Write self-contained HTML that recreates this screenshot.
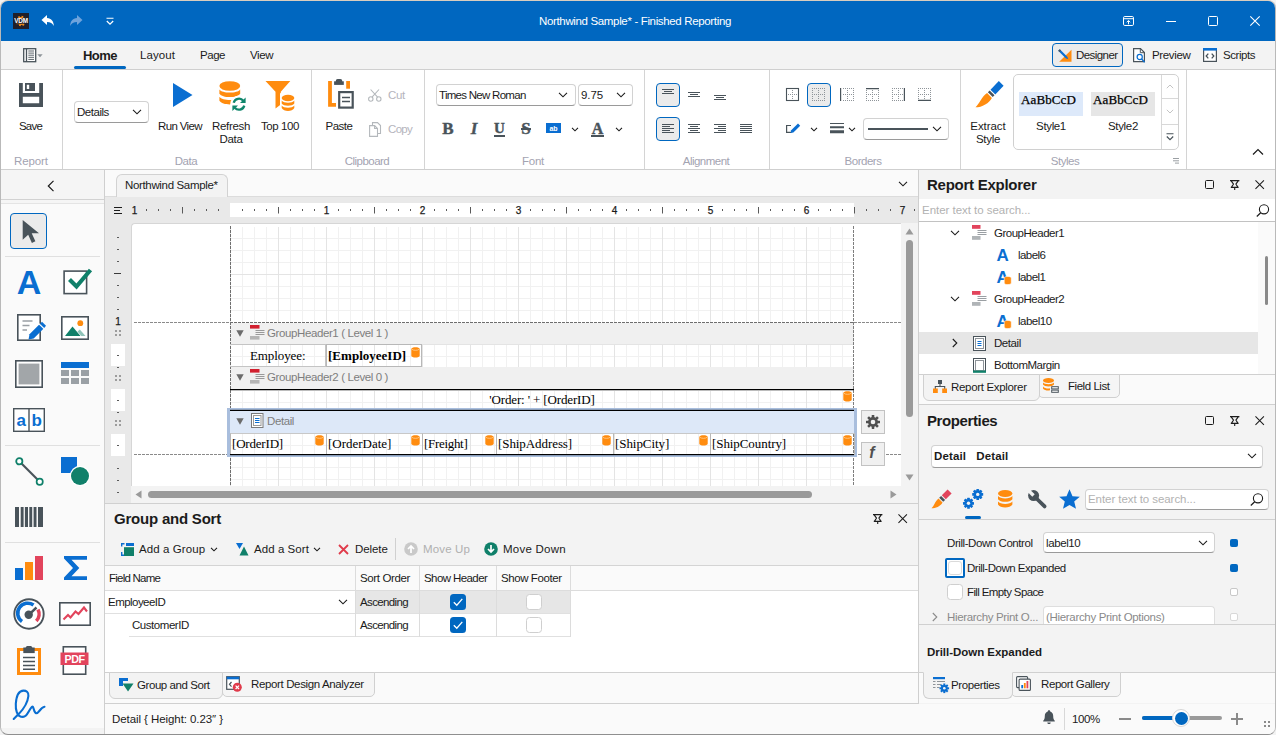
<!DOCTYPE html>
<html lang="en">
<head>
<meta charset="utf-8">
<title>Northwind Sample* - Finished Reporting</title>
<style>
html,body{margin:0;padding:0;}
body{width:1276px;height:735px;overflow:hidden;background:#f3f3f3;font-family:"Liberation Sans",sans-serif;font-size:12px;color:#1b1b1b;}
#win{position:absolute;left:0;top:0;width:1276px;height:735px;box-sizing:border-box;border:1px solid #b9b9b9;border-top-color:#d8cdbf;border-bottom-color:#8f8f8f;border-radius:8px;overflow:hidden;background:#f3f3f3;}
#in{position:absolute;left:-1px;top:-1px;width:1276px;height:735px;}
.a{position:absolute;box-sizing:border-box;}
.t{position:absolute;white-space:nowrap;line-height:16px;height:16px;font-size:11.5px;letter-spacing:-0.3px;}
.b{font-weight:bold;}
.c{text-align:center;}
.g{color:#a3a3b1;}
.hl{position:absolute;height:1px;background:#d4d4d4;}
.vl{position:absolute;width:1px;background:#d4d4d4;}
svg{position:absolute;overflow:visible;}
.ser{font-family:"Liberation Serif",serif;}
.cb{position:absolute;box-sizing:border-box;background:#fff;border:1px solid #d2d2d2;border-bottom-color:#9a9a9a;border-radius:4px;}
.ptitle{font-size:15px;font-weight:bold;letter-spacing:-0.35px;line-height:20px;height:20px;color:#1b1b1b;}
</style>
</head>
<body>
<div id="win"><div id="in">
<!-- ===== Title bar ===== -->
<div class="a" style="left:0;top:0;width:1276px;height:41px;background:#0067c0;"></div>
<div class="a" style="left:13px;top:13px;width:16px;height:16px;background:#1f1f2b;"></div>
<svg style="left:13px;top:13px" width="16" height="16" viewBox="0 0 16 16"><circle cx="8" cy="8" r="4.2" fill="none" stroke="#f08a1c" stroke-width="2.2" stroke-dasharray="1.6 1.7"/><circle cx="8" cy="8" r="3.2" fill="none" stroke="#f08a1c" stroke-width="1.4"/><rect x="1" y="5.3" width="14" height="5.4" fill="#1f1f2b"/><text x="8" y="10.3" font-family="Liberation Sans" font-size="6.4" font-weight="bold" fill="#fff" text-anchor="middle" letter-spacing="-0.2">VDM</text></svg>
<!-- undo / redo / customize -->
<svg style="left:41px;top:15px" width="14" height="12" viewBox="0 0 14 12"><path d="M6 0 L0.5 5 L6 10 V7 C9.5 7 11.5 8.3 12.8 11 C12.8 6.5 10.5 3.2 6 3 Z" fill="#fff"/></svg>
<svg style="left:69px;top:15px" width="14" height="12" viewBox="0 0 14 12"><path d="M8 0 L13.5 5 L8 10 V7 C4.5 7 2.5 8.3 1.2 11 C1.2 6.5 3.5 3.2 8 3 Z" fill="#6ea3dc"/></svg>
<svg style="left:105px;top:17px" width="10" height="9" viewBox="0 0 10 9"><path d="M1.5 1.2 H8.5" stroke="#fff" stroke-width="1.1" fill="none"/><path d="M1.8 4 L5 7.2 L8.2 4" stroke="#fff" stroke-width="1.2" fill="none"/></svg>
<div class="t c" style="left:435px;width:400px;top:13px;color:#fff;letter-spacing:-0.347px;">Northwind Sample* - Finished Reporting</div>
<!-- window buttons -->
<svg style="left:1123px;top:16px" width="11" height="10" viewBox="0 0 11 10"><rect x="0.500" y="0.500" width="10" height="9" rx="1.300" fill="none" stroke="#fff"/><path d="M0.500 2.700 H10.500" stroke="#fff"/><path d="M5.500 8.300 V4.800 M3.700 6.200 L5.500 4.500 L7.300 6.200" stroke="#fff" fill="none"/></svg>
<div class="a" style="left:1166px;top:21px;width:10px;height:1px;background:#fff;"></div>
<div class="a" style="left:1208px;top:16px;width:10px;height:10px;border:1px solid #fff;border-radius:1.500px;"></div>
<svg style="left:1250px;top:16px" width="10" height="10" viewBox="0 0 10 10"><path d="M0.300 0.300 L9.700 9.700 M9.700 0.300 L0.300 9.700" stroke="#fff" stroke-width="1.100"/></svg>

<!-- ===== Tab bar ===== -->
<div class="a" style="left:0;top:41px;width:1276px;height:28px;background:#f3f3f3;"></div>
<div class="hl" style="left:0;top:69px;width:1276px;background:#cfcfcf;"></div>
<svg style="left:23px;top:48px" width="22" height="15" viewBox="0 0 22 15"><rect x="0.7" y="0.7" width="12" height="13" fill="#fff" stroke="#49535a" stroke-width="1.3"/><path d="M3.5 0.7 V13.7" stroke="#49535a" stroke-width="1.3"/><path d="M5.3 3 H11 M5.3 5.1 H11 M5.3 7.2 H11 M5.3 9.3 H11 M5.3 11.4 H11" stroke="#49535a" stroke-width="0.9"/><path d="M14.3 6.3 H19.7 L17 9.2 Z" fill="#8e9499"/></svg>
<div class="t b" style="left:83px;top:48px;font-size:13px;letter-spacing:-0.531px;">Home</div>
<div class="a" style="left:74px;top:66px;width:52px;height:3px;background:#0067c0;border-radius:1.500px;"></div>
<div class="t" style="left:140px;top:47px;letter-spacing:0.078px;">Layout</div>
<div class="t" style="left:200px;top:47px;letter-spacing:-0.465px;">Page</div>
<div class="t" style="left:250px;top:47px;letter-spacing:-0.380px;">View</div>
<!-- Designer / Preview / Scripts -->
<div class="a" style="left:1052px;top:43px;width:71px;height:24px;background:#ebebeb;border:1px solid #0067c0;border-radius:4px;"></div>
<svg style="left:1058px;top:49px" width="14" height="13" viewBox="0 0 14 13"><path d="M13.500 0.800 V12.700 H1.200 Z" fill="#ff8c0f"/><path d="M0.200 1.800 L1.800 0.200 L9.300 7.700 L10.300 10.300 L7.700 9.300 Z" fill="#0a6ed1"/><path d="M0.200 1.800 L1.800 0.200 L3 1.400 L1.400 3 Z" fill="#49535a"/></svg>
<div class="t" style="left:1076px;top:47px;letter-spacing:-0.566px;">Designer</div>
<svg style="left:1133px;top:48px" width="13" height="15" viewBox="0 0 13 15"><path d="M0.600 0.600 H7.500 L11.400 4.500 V13.600 H0.600 Z" fill="#fff" stroke="#49535a" stroke-width="1.200"/><path d="M7.300 0.800 V4.700 H11.200" fill="none" stroke="#49535a" stroke-width="1"/><circle cx="6.700" cy="9" r="2.600" fill="#fff" stroke="#0a6ed1" stroke-width="1.200"/><path d="M8.600 11 L11.600 14.200" stroke="#0a6ed1" stroke-width="1.400"/></svg>
<div class="t" style="left:1152px;top:47px;letter-spacing:-0.358px;">Preview</div>
<svg style="left:1203px;top:48px" width="14" height="14" viewBox="0 0 14 14"><rect x="0.600" y="0.600" width="12.800" height="12.800" fill="#fff" stroke="#49535a" stroke-width="1.200"/><rect x="0" y="0" width="14" height="2.600" fill="#0a6ed1"/><path d="M5.300 5.600 L3.200 8 L5.300 10.400 M8.700 5.600 L10.800 8 L8.700 10.400" stroke="#49535a" stroke-width="1.300" fill="none"/></svg>
<div class="t" style="left:1223px;top:47px;letter-spacing:-0.451px;">Scripts</div>
<!-- ===== Ribbon ===== -->
<div class="a" style="left:0;top:70px;width:1276px;height:99px;background:#fff;"></div>
<div class="hl" style="left:0;top:169px;width:1276px;background:#cfcfcf;"></div>
<div class="vl" style="left:62px;top:70px;height:99px;"></div>
<div class="vl" style="left:311px;top:70px;height:99px;"></div>
<div class="vl" style="left:424px;top:70px;height:99px;"></div>
<div class="vl" style="left:644px;top:70px;height:99px;"></div>
<div class="vl" style="left:769px;top:70px;height:99px;"></div>
<div class="vl" style="left:960px;top:70px;height:99px;"></div>
<div class="vl" style="left:1186px;top:70px;height:99px;"></div>
<!-- group captions -->
<div class="t c g" style="left:0;width:62px;top:153px;letter-spacing:-0.105px;">Report</div>
<div class="t c g" style="left:136px;width:100px;top:153px;letter-spacing:-0.424px;">Data</div>
<div class="t c g" style="left:317px;width:100px;top:153px;letter-spacing:-0.526px;">Clipboard</div>
<div class="t c g" style="left:483px;width:100px;top:153px;letter-spacing:-0.229px;">Font</div>
<div class="t c g" style="left:656px;width:100px;top:153px;letter-spacing:-0.527px;">Alignment</div>
<div class="t c g" style="left:813px;width:100px;top:153px;letter-spacing:-0.483px;">Borders</div>
<div class="t c g" style="left:1015px;width:100px;top:153px;letter-spacing:-0.505px;">Styles</div>
<svg style="left:1173px;top:158px" width="6" height="6" viewBox="0 0 6 6"><path d="M0 0.5 H6 M0 2.8 H6 M2 5.1 H6" stroke="#8e9499" stroke-width="0.9"/></svg>
<svg style="left:1252px;top:148px" width="12" height="8" viewBox="0 0 12 8"><path d="M1 6.5 L6 1.5 L11 6.5" stroke="#1b1b1b" stroke-width="1.2" fill="none"/></svg>

<!-- Report: Save -->
<svg style="left:19px;top:83px" width="24" height="24" viewBox="0 0 24 24"><path d="M0 0 H3.800 V10 H20.200 V0 H24 V24 H0 Z M3.800 13.800 V20.300 H20.200 V13.800 Z" fill="#49535a" fill-rule="evenodd"/><path d="M6 0 H16 V8 H6 Z M7.800 1.800 V6 H10.200 V1.800 Z" fill="#49535a" fill-rule="evenodd"/></svg>
<div class="t c" style="left:0;width:61px;top:118px;letter-spacing:-0.755px;">Save</div>

<!-- Data -->
<div class="cb" style="left:74px;top:101px;width:75px;height:22px;"></div>
<div class="t" style="left:77px;top:104px;letter-spacing:-0.479px;">Details</div>
<svg style="left:132px;top:109px" width="10" height="6" viewBox="0 0 10 6"><path d="M1 0.8 L5 4.8 L9 0.8" stroke="#1b1b1b" stroke-width="1.1" fill="none"/></svg>
<svg style="left:173px;top:83px" width="20" height="24" viewBox="0 0 20 24"><path d="M0 0 L19.5 12 L0 24 Z" fill="#0a6ed1"/></svg>
<div class="t c" style="left:150px;width:60px;top:118px;letter-spacing:-0.652px;">Run View</div>
<!-- Refresh Data icon -->
<svg style="left:219px;top:81px" width="28" height="31" viewBox="0 0 28 31"><g fill="#ff8c0f"><ellipse cx="10.800" cy="5" rx="10.400" ry="4.800"/><path d="M0.400 8.400 C3.400 12.600 18.200 12.600 21.200 8.400 V12.700 C18.200 17.200 3.400 17.200 0.400 12.700 Z"/><path d="M0.400 15.700 C3.400 20 18.200 20 21.200 15.700 V19.800 C18.200 24.700 3.400 24.700 0.400 19.800 Z"/></g><circle cx="20" cy="23.200" r="8.800" fill="#fff"/><g fill="none" stroke="#10866c" stroke-width="2.300"><path d="M14.700 21.800 A5.500 5.500 0 0 1 24.300 19.800"/><path d="M25.300 24.600 A5.500 5.500 0 0 1 15.700 26.600"/></g><path d="M26.600 16.400 V22 H21 Z" fill="#10866c"/><path d="M13.400 30 V24.400 H19 Z" fill="#10866c"/></svg>
<div class="t c" style="left:201px;width:60px;top:118px;letter-spacing:-0.297px;">Refresh</div>
<div class="t c" style="left:201px;width:60px;top:131px;letter-spacing:-0.324px;">Data</div>
<!-- Top 100 icon -->
<svg style="left:265px;top:81px" width="30" height="31" viewBox="0 0 30 31"><path d="M0.500 0 H25.300 L15.800 10.800 V23.500 L10.500 27.600 V10.800 Z" fill="#ff8c0f"/><rect x="15" y="12.200" width="15" height="19" fill="#fff"/><g fill="#ff8c0f"><ellipse cx="23" cy="17" rx="6.300" ry="3.200"/><path d="M16.700 19.600 C18.700 22.600 27.300 22.600 29.300 19.600 V22.400 C27.300 25.400 18.700 25.400 16.700 22.400 Z"/><path d="M16.700 24.400 C18.700 27.400 27.300 27.400 29.300 24.400 V27 C27.300 31 18.700 31 16.700 27 Z"/></g></svg>
<div class="t c" style="left:250px;width:60px;top:118px;letter-spacing:-0.420px;">Top 100</div>

<!-- Clipboard -->
<svg style="left:328px;top:79px" width="27" height="30" viewBox="0 0 27 30"><path d="M0.100 2 H3.900 V24 H8 V27.800 H0.100 Z" fill="#ff8c0f"/><rect x="18.200" y="2" width="3.800" height="7.700" fill="#ff8c0f"/><rect x="6.100" y="2.300" width="9.700" height="3.600" fill="#49535a"/><rect x="7.800" y="0" width="6.400" height="4" rx="1.800" fill="#49535a"/><rect x="11.200" y="13.100" width="13.500" height="15.500" fill="#fff" stroke="#49535a" stroke-width="2.200"/><path d="M14 18.500 H22 M14 22.500 H22" stroke="#49535a" stroke-width="1.600"/></svg>
<div class="t c" style="left:311px;width:56px;top:118px;letter-spacing:-0.484px;">Paste</div>
<svg style="left:368px;top:89px" width="14" height="13" viewBox="0 0 14 13"><g fill="none" stroke="#b4b8bc" stroke-width="1.100"><circle cx="2.800" cy="10" r="2.200"/><circle cx="10.800" cy="10" r="2.200"/><path d="M4 8.200 L11 0.500 M9.600 8.200 L2.600 0.500"/></g></svg>
<div class="t" style="left:388px;top:87px;color:#b4b4bc;letter-spacing:-0.369px;">Cut</div>
<svg style="left:369px;top:122px" width="13" height="15" viewBox="0 0 13 15"><g fill="#fff" stroke="#b4b8bc" stroke-width="1.100"><path d="M3.500 0.600 H8.500 L11.500 3.600 V11.500 H3.500 Z"/><path d="M0.600 3.600 H5.600 L8.500 6.500 V14.400 H0.600 Z"/><path d="M5.600 3.600 V6.500 H8.500" fill="none"/></g></svg>
<div class="t" style="left:388px;top:121px;color:#b4b4bc;letter-spacing:-0.665px;">Copy</div>

<!-- Font -->
<div class="cb" style="left:436px;top:84px;width:140px;height:22px;"></div>
<div class="t" style="left:439px;top:87px;letter-spacing:-0.717px;">Times New Roman</div>
<svg style="left:558px;top:92px" width="10" height="6" viewBox="0 0 10 6"><path d="M1 0.800 L5 4.800 L9 0.800" stroke="#1b1b1b" stroke-width="1.100" fill="none"/></svg>
<div class="cb" style="left:578px;top:84px;width:55px;height:22px;"></div>
<div class="t" style="left:581px;top:87px;letter-spacing:-0.048px;">9.75</div>
<svg style="left:616px;top:92px" width="10" height="6" viewBox="0 0 10 6"><path d="M1 0.800 L5 4.800 L9 0.800" stroke="#1b1b1b" stroke-width="1.100" fill="none"/></svg>
<div class="t b c ser" style="left:438px;width:20px;top:121px;font-size:17px;-webkit-text-stroke:0.400px #49535a;color:#49535a;letter-spacing:0;">B</div>
<div class="t b c ser" style="left:464px;width:20px;top:121px;font-size:17px;-webkit-text-stroke:0.400px #49535a;color:#49535a;letter-spacing:0;font-style:italic;">I</div>
<div class="t b c ser" style="left:489.500px;width:20px;top:120px;font-size:15px;-webkit-text-stroke:0.400px #49535a;color:#49535a;letter-spacing:0;">U</div>
<div class="a" style="left:494px;top:135px;width:11px;height:2px;background:#49535a;"></div>
<div class="t b c ser" style="left:516px;width:20px;top:121px;font-size:17px;-webkit-text-stroke:0.400px #49535a;color:#49535a;letter-spacing:0;">S</div>
<div class="a" style="left:521px;top:128px;width:10px;height:1.500px;background:#49535a;"></div>
<div class="a" style="left:546px;top:123px;width:15px;height:10px;background:#0a6ed1;"></div>
<div class="t c b" style="left:546px;width:15px;top:121px;font-size:7px;color:#fff;letter-spacing:0;">ab</div>
<svg style="left:571px;top:127px" width="8" height="5" viewBox="0 0 8 5"><path d="M1 0.800 L4 3.800 L7 0.800" stroke="#1b1b1b" stroke-width="1.100" fill="none"/></svg>
<div class="t b c ser" style="left:587.500px;width:20px;top:121px;font-size:16px;-webkit-text-stroke:0.400px #49535a;color:#49535a;letter-spacing:0;">A</div>
<div class="a" style="left:591px;top:135px;width:13px;height:2px;background:#49535a;"></div>
<svg style="left:615px;top:127px" width="8" height="5" viewBox="0 0 8 5"><path d="M1 0.800 L4 3.800 L7 0.800" stroke="#1b1b1b" stroke-width="1.100" fill="none"/></svg>
<!-- Alignment -->
<div class="a" style="left:656px;top:83px;width:24px;height:24px;background:#ebebeb;border:1px solid #0067c0;border-radius:4px;"></div>
<div class="a" style="left:656px;top:117px;width:24px;height:24px;background:#ebebeb;border:1px solid #0067c0;border-radius:4px;"></div>
<svg style="left:662px;top:88px" width="64" height="14" viewBox="0 0 64 14" stroke="#49535a" stroke-width="1.100"><path d="M0 1.500 H12 M2 3.500 H10 M0 5.500 H12"/><path d="M26 4.500 H38 M28 6.500 H36 M26 8.500 H38"/><path d="M52 7.500 H64 M54 9.500 H62 M52 11.500 H64"/></svg>
<svg style="left:662px;top:123px" width="90" height="12" viewBox="0 0 90 12" stroke="#49535a" stroke-width="1.100"><path d="M0 1.500 H12 M0 3.500 H8 M0 5.500 H12 M0 7.500 H8 M0 9.500 H12"/><path d="M26 1.500 H38 M28 3.500 H36 M26 5.500 H38 M28 7.500 H36 M26 9.500 H38"/><path d="M52 1.500 H64 M56 3.500 H64 M52 5.500 H64 M56 7.500 H64 M52 9.500 H64"/><path d="M78 1.500 H90 M78 3.500 H90 M78 5.500 H90 M78 7.500 H90 M78 9.500 H90"/></svg>

<!-- Borders -->
<div class="a" style="left:807px;top:83px;width:24px;height:24px;background:#ebebeb;border:1px solid #0067c0;border-radius:4px;"></div>
<svg style="left:785px;top:88px" width="147" height="14" viewBox="0 0 147 14">
<path d="M7.5 2 V11 M3 6.5 H12 M27.5 0 V13 M33.5 0 V13 M39.5 0 V13 M27 0.5 H40 M27 6.5 H40 M27 12.5 H40 M62.5 0 V13 M68.5 0 V13 M58 0.5 H69 M58 6.5 H69 M58 12.5 H69 M81.5 2 V13 M87.5 2 V13 M93.5 2 V13 M81 6.5 H94 M81 12.5 H94 M107.5 0 V13 M113.5 0 V13 M107 0.5 H118 M107 6.5 H118 M107 12.5 H118 M133.5 0 V11 M139.5 0 V11 M145.5 0 V11 M133 0.5 H146 M133 6.5 H146" fill="none" stroke="#8e9499" stroke-width="1" stroke-dasharray="1 1"/>
<rect x="1.500" y="0.500" width="12" height="12" fill="none" stroke="#49535a" stroke-width="1.100"/>
<path d="M55.600 0 V13 M119.400 0 V13" stroke="#49535a" stroke-width="1.200"/>
<path d="M81 0.600 H94 M133 12.400 H146" stroke="#49535a" stroke-width="1.200"/>
</svg>
<!-- pen / line weight / line style -->
<svg style="left:786px;top:121.500px" width="16" height="12" viewBox="0 0 16 12"><path d="M5 3.500 H0.600 V10.400 H5.500" fill="none" stroke="#49535a" stroke-width="1.200"/><path d="M5.200 8.300 L12 1.500 L14.200 3.700 L7.400 10.500 L4.600 11.100 Z" fill="#0a6ed1"/></svg>
<svg style="left:810px;top:127px" width="8" height="5" viewBox="0 0 8 5"><path d="M1 0.800 L4 3.800 L7 0.800" stroke="#1b1b1b" stroke-width="1.100" fill="none"/></svg>
<svg style="left:830px;top:122px" width="14" height="12" viewBox="0 0 14 12"><path d="M0 1.500 H14" stroke="#49535a" stroke-width="1.200"/><path d="M0 5.300 H14" stroke="#49535a" stroke-width="2"/><path d="M0 9.800 H14" stroke="#49535a" stroke-width="3"/></svg>
<svg style="left:848px;top:127px" width="8" height="5" viewBox="0 0 8 5"><path d="M1 0.800 L4 3.800 L7 0.800" stroke="#1b1b1b" stroke-width="1.100" fill="none"/></svg>
<div class="cb" style="left:863px;top:118px;width:86px;height:22px;"></div>
<div class="a" style="left:868px;top:128px;width:60px;height:1.500px;background:#49535a;"></div>
<svg style="left:932px;top:126px" width="10" height="6" viewBox="0 0 10 6"><path d="M1 0.800 L5 4.800 L9 0.800" stroke="#1b1b1b" stroke-width="1.100" fill="none"/></svg>

<!-- Styles -->
<svg style="left:975px;top:81px" width="29" height="27" viewBox="0 0 29 27"><path d="M23.800 0 L28.600 4.800 L20.300 13.500 L15.500 8.700 Z" fill="#0a6ed1"/><path d="M14.700 9.500 L19.500 14.300 L17.700 16.100 L12.900 11.300 Z" fill="#49535a"/><path d="M12.100 12.100 L16.900 16.900 C14.500 22 7 26.300 0.500 26.300 C4.500 23 6.500 15.800 12.100 12.100 Z" fill="#ff8c0f"/></svg>
<div class="t c" style="left:958px;width:60px;top:118px;letter-spacing:-0.057px;">Extract</div>
<div class="t c" style="left:958px;width:60px;top:131px;letter-spacing:-0.316px;">Style</div>
<div class="a" style="left:1013px;top:74px;width:166px;height:76px;border:1px solid #d0d0d0;border-radius:5px;background:#fff;"></div>
<div class="vl" style="left:1161px;top:75px;height:74px;background:#d8d8d8;"></div>
<div class="hl" style="left:1162px;top:98px;width:16px;background:#d8d8d8;"></div>
<div class="hl" style="left:1162px;top:124px;width:16px;background:#d8d8d8;"></div>
<svg style="left:1166px;top:84px" width="8" height="5" viewBox="0 0 8 5"><path d="M0.800 4.200 L4 1 L7.200 4.200" stroke="#c4c4c4" stroke-width="1" fill="none"/></svg>
<svg style="left:1166px;top:109px" width="8" height="5" viewBox="0 0 8 5"><path d="M0.800 0.800 L4 4 L7.200 0.800" stroke="#c4c4c4" stroke-width="1" fill="none"/></svg>
<svg style="left:1166px;top:133px" width="8" height="8" viewBox="0 0 8 8"><path d="M0.500 0.800 H7.500" stroke="#49535a" stroke-width="1.100"/><path d="M0.800 3.500 L4 6.700 L7.200 3.500" stroke="#49535a" stroke-width="1.200" fill="none"/></svg>
<div class="a" style="left:1019px;top:92px;width:64px;height:24px;background:#dde9fa;"></div>
<div class="a" style="left:1091px;top:92px;width:64px;height:24px;background:#e6e6e6;"></div>
<div class="t ser" style="left:1021px;top:92px;font-size:13px;-webkit-text-stroke:0.250px #000;color:#000;letter-spacing:0.118px;">AaBbCcD</div>
<div class="t ser" style="left:1093px;top:92px;font-size:13px;-webkit-text-stroke:0.250px #000;color:#000;letter-spacing:0.118px;">AaBbCcD</div>
<div class="t c" style="left:1019px;width:64px;top:118px;letter-spacing:-0.361px;">Style1</div>
<div class="t c" style="left:1091px;width:64px;top:118px;letter-spacing:-0.311px;">Style2</div>
<!-- ===== Toolbox (left) ===== -->
<div class="a" style="left:0;top:170px;width:104px;height:558px;background:#fafafa;"></div>
<div class="a" style="left:0;top:170px;width:104px;height:33px;background:#f5f5f5;"></div>
<div class="hl" style="left:0;top:199px;width:104px;background:#d2d2d2;"></div>
<div class="hl" style="left:0;top:203px;width:104px;background:#e4e4e4;"></div>
<div class="vl" style="left:104px;top:170px;height:565px;background:#cfcfcf;"></div>
<svg style="left:47px;top:180px" width="8" height="12" viewBox="0 0 8 12"><path d="M6.500 0.800 L1.300 6 L6.500 11.200" stroke="#1b1b1b" stroke-width="1.200" fill="none"/></svg>
<!-- pointer -->
<div class="a" style="left:10px;top:213px;width:37px;height:36px;background:#ebebeb;border:1px solid #0067c0;border-radius:4px;"></div>
<svg style="left:22px;top:220px" width="17" height="23" viewBox="0 0 17 23"><path d="M0.700 0 L17 13.200 H9.700 L13.400 21.300 L9.900 22.900 L6.200 14.800 L0.700 19.800 Z" fill="#49535a"/></svg>
<div class="hl" style="left:5px;top:256px;width:95px;background:#e0e0e0;"></div>
<!-- A label -->
<div class="t b c" style="left:14px;width:30px;top:262px;font-size:34px;line-height:40px;height:40px;color:#0a6ed1;letter-spacing:0;">A</div>
<!-- checkbox -->
<svg style="left:63px;top:268px" width="29" height="27" viewBox="0 0 29 27"><rect x="1.100" y="3.100" width="22.500" height="22.500" fill="#fff" stroke="#49535a" stroke-width="1.600"/><path d="M6.500 11.500 L13.500 18.500 L27.500 2" fill="none" stroke="#10806a" stroke-width="4.200"/></svg>
<!-- rich text -->
<svg style="left:17px;top:314px" width="29" height="28" viewBox="0 0 29 28"><rect x="0.800" y="0.800" width="22.400" height="25.400" fill="#fff" stroke="#49535a" stroke-width="1.600"/><path d="M5.500 7 H15.500 M5.500 11.500 H12.500 M5.500 16 H10" stroke="#9aa0a5" stroke-width="1.700"/><path d="M12.500 20.300 L23 9.800 L27.200 14 L16.700 24.500 L11.500 25.500 Z" fill="#0a6ed1"/><path d="M23 9.800 L25 7.800 L29 11.800 L27.200 14 Z" fill="#0a6ed1"/><path d="M21.800 9.600 L27.400 15.200" stroke="#fff" stroke-width="1.200"/></svg>
<!-- picture -->
<svg style="left:61px;top:316px" width="28" height="24" viewBox="0 0 28 24"><rect x="0.800" y="0.800" width="26.400" height="22.400" fill="#fff" stroke="#49535a" stroke-width="1.600"/><circle cx="19.300" cy="7.200" r="2.900" fill="#ff8c0f"/><path d="M4 20 L11.500 10.500 L19.500 20 Z" fill="#10806a"/><path d="M16.500 15.500 L18.800 13.500 L24.500 20 H20.300 Z" fill="#8ec3b8"/></svg>
<!-- panel -->
<svg style="left:15px;top:360px" width="28" height="28" viewBox="0 0 28 28"><rect x="0.800" y="0.800" width="26.400" height="26.400" fill="#fff" stroke="#49535a" stroke-width="1.600"/><rect x="3.600" y="3.600" width="20.800" height="20.800" fill="#a2a6a9"/></svg>
<!-- table -->
<svg style="left:61px;top:362px" width="28" height="22" viewBox="0 0 28 22"><rect x="0" y="0" width="28" height="6" fill="#0a6ed1"/><g fill="#9aa0a5"><rect x="0" y="8" width="8" height="6"/><rect x="10" y="8" width="8" height="6"/><rect x="20" y="8" width="8" height="6"/><rect x="0" y="16" width="8" height="6"/><rect x="10" y="16" width="8" height="6"/><rect x="20" y="16" width="8" height="6"/></g></svg>
<!-- character comb ab -->
<svg style="left:13px;top:408px" width="32" height="24" viewBox="0 0 32 24"><rect x="0.700" y="0.700" width="30.600" height="22.600" fill="#fff" stroke="#49535a" stroke-width="1.400"/><path d="M16 0.700 V23.300" stroke="#49535a" stroke-width="1.400"/><text x="8.300" y="18.300" font-family="Liberation Sans" font-weight="bold" font-size="17" fill="#0a6ed1" text-anchor="middle">a</text><text x="23.800" y="18.300" font-family="Liberation Sans" font-weight="bold" font-size="17" fill="#0a6ed1" text-anchor="middle">b</text></svg>
<div class="hl" style="left:5px;top:445px;width:95px;background:#e0e0e0;"></div>
<!-- line -->
<svg style="left:15px;top:457px" width="30" height="30" viewBox="0 0 30 30"><path d="M5 5 L25 25" stroke="#49535a" stroke-width="2.200"/><circle cx="4.300" cy="4.300" r="3.100" fill="#fff" stroke="#10806a" stroke-width="1.800"/><circle cx="24.700" cy="24.700" r="3.100" fill="#fff" stroke="#10806a" stroke-width="1.700"/></svg>
<!-- shape -->
<svg style="left:61px;top:457px" width="29" height="29" viewBox="0 0 29 29"><rect x="0" y="0" width="16" height="16" fill="#0a6ed1"/><circle cx="19" cy="19" r="10.200" fill="#fff"/><circle cx="19" cy="19" r="9" fill="#10806a"/></svg>
<!-- barcode -->
<svg style="left:15px;top:507px" width="29" height="20" viewBox="0 0 29 20" fill="#49535a"><rect x="0" width="4" height="20"/><rect x="5.700" width="2.900" height="20"/><rect x="9.900" width="3.100" height="20"/><rect x="14.300" width="2.900" height="20"/><rect x="18.600" width="2.900" height="20"/><rect x="23" width="5" height="20"/></svg>
<div class="hl" style="left:5px;top:542px;width:95px;background:#e0e0e0;"></div>
<!-- chart -->
<svg style="left:15px;top:556px" width="28" height="24" viewBox="0 0 28 24"><rect x="0" y="12" width="8" height="12" fill="#0a6ed1"/><rect x="10" y="6" width="8" height="18" fill="#ff8c0f"/><rect x="20" y="0" width="8" height="24" fill="#e2445c"/></svg>
<!-- sigma -->
<svg style="left:63px;top:556px" width="25" height="24" viewBox="0 0 25 24"><path d="M1 0 H24 V3.800 H8.500 L16.300 12 L8.500 20.200 H24 V24 H1 V21.400 L10 12 L1 2.600 Z" fill="#0a6ed1"/></svg>
<!-- gauge -->
<svg style="left:13px;top:598px" width="32" height="32" viewBox="0 0 32 32"><circle cx="16" cy="16" r="14.700" fill="#fff" stroke="#49535a" stroke-width="1.900"/><path d="M9 23.500 A10 10 0 0 1 20.500 7" fill="none" stroke="#0a6ed1" stroke-width="3.600"/><path d="M25 11.500 A10 10 0 0 1 23.300 23" fill="none" stroke="#e2445c" stroke-width="3.600"/><circle cx="15.700" cy="16.800" r="4.200" fill="#49535a"/><path d="M15.700 16.800 L23.500 9.500" stroke="#49535a" stroke-width="2.400"/></svg>
<!-- sparkline -->
<svg style="left:59px;top:602px" width="32" height="24" viewBox="0 0 32 24"><rect x="0.800" y="0.800" width="30.400" height="22.400" fill="#fff" stroke="#49535a" stroke-width="1.600"/><path d="M4.500 17.500 L9 13 L11.500 15.500 L16.500 9.500 L19.500 12 L25 5.500 L28 9.500" fill="none" stroke="#e2445c" stroke-width="2.100"/></svg>
<!-- sub report clipboard -->
<svg style="left:17px;top:646px" width="24" height="29" viewBox="0 0 24 29"><rect x="1.500" y="3.500" width="21" height="24" fill="#fff" stroke="#ff8c0f" stroke-width="3"/><rect x="6.300" y="1.500" width="11.400" height="5.600" fill="#49535a"/><rect x="8.800" y="0" width="6.400" height="4" rx="1.600" fill="#49535a"/><path d="M6 11.500 H18 M6 15.500 H18 M6 19.500 H18 M6 23.300 H18" stroke="#49535a" stroke-width="1.600"/></svg>
<!-- pdf -->
<svg style="left:60px;top:646px" width="29" height="29" viewBox="0 0 29 29"><rect x="3.300" y="0.800" width="22.400" height="27.400" fill="#fff" stroke="#49535a" stroke-width="1.600"/><rect x="0.500" y="6.500" width="28" height="12.500" fill="#e2445c"/><text x="14.500" y="16.800" font-family="Liberation Sans" font-weight="bold" font-size="11" fill="#fff" text-anchor="middle" letter-spacing="-0.500" textLength="20" lengthAdjust="spacingAndGlyphs">PDF</text></svg>
<!-- signature -->
<svg style="left:12px;top:690px" width="34" height="32" viewBox="0 0 34 32"><path d="M1.700 29 L7.100 23.600 C11 19.500 15.500 14 16.400 6 C16.800 2 14 0.600 11.600 0.600 C7 0.600 4.400 5 3.800 13.800 C3.500 19 4.500 26.900 11 26.900 C15.500 26.900 16.500 20 20 16.800 C22 15.500 21.500 22.500 24.100 23.300 C26.500 23.800 28.500 17.500 32.500 16.800" fill="none" stroke="#0a6ed1" stroke-width="2.100" stroke-linecap="round"/></svg>
<!-- ===== Designer ===== -->
<div class="a" style="left:105px;top:170px;width:814px;height:27px;background:#fafafa;"></div>
<div class="hl" style="left:105px;top:196px;width:814px;background:#dcdcdc;"></div>
<div class="a" style="left:116px;top:174px;width:112px;height:23px;background:#f3f3f3;border:1px solid #d2d2d2;border-bottom:none;border-radius:6px 6px 0 0;"></div>
<div class="t" style="left:125px;top:177px;letter-spacing:-0.343px;">Northwind Sample*</div>
<svg style="left:898px;top:181px" width="10" height="6" viewBox="0 0 10 6"><path d="M1 0.800 L5 4.800 L9 0.800" stroke="#1b1b1b" stroke-width="1.100" fill="none"/></svg>
<div class="a" style="left:105px;top:197px;width:814px;height:306px;background:#e9e9e9;"></div>
<div class="a" style="left:230px;top:203px;width:624px;height:14px;background:#fff;"></div>
<svg style="left:114px;top:206px" width="9" height="9" viewBox="0 0 9 9"><path d="M0 1.500 H8 M0 4.500 H6 M0 7.500 H8" stroke="#1b1b1b" stroke-width="1"/></svg>
<svg style="left:0;top:203px" width="919" height="14" viewBox="0 0 919 14"><path d="M146.5 6 V8 M158.5 6 V8 M170.5 6 V8 M194.5 6 V8 M206.5 6 V8 M218.5 6 V8 M242.5 6 V8 M254.5 6 V8 M266.5 6 V8 M290.5 6 V8 M302.5 6 V8 M314.5 6 V8 M338.5 6 V8 M350.5 6 V8 M362.5 6 V8 M386.5 6 V8 M398.5 6 V8 M410.5 6 V8 M434.5 6 V8 M446.5 6 V8 M458.5 6 V8 M482.5 6 V8 M494.5 6 V8 M506.5 6 V8 M530.5 6 V8 M542.5 6 V8 M554.5 6 V8 M578.5 6 V8 M590.5 6 V8 M602.5 6 V8 M626.5 6 V8 M638.5 6 V8 M650.5 6 V8 M674.5 6 V8 M686.5 6 V8 M698.5 6 V8 M722.5 6 V8 M734.5 6 V8 M746.5 6 V8 M770.5 6 V8 M782.5 6 V8 M794.5 6 V8 M818.5 6 V8 M830.5 6 V8 M842.5 6 V8 M866.5 6 V8 M878.5 6 V8 M890.5 6 V8 M914.5 6 V8" stroke="#5a5a5a" stroke-width="1"/><path d="M182.5 4 V10.500 M278.5 4 V10.500 M374.5 4 V10.500 M470.5 4 V10.500 M566.5 4 V10.500 M662.5 4 V10.500 M758.5 4 V10.500 M854.5 4 V10.500" stroke="#5a5a5a" stroke-width="1"/><text x="134.5" y="11" font-family="Liberation Sans" font-size="10" stroke="#1b1b1b" stroke-width="0.250" fill="#1b1b1b" text-anchor="middle">1</text><text x="326.5" y="11" font-family="Liberation Sans" font-size="10" stroke="#1b1b1b" stroke-width="0.250" fill="#1b1b1b" text-anchor="middle">1</text><text x="422.5" y="11" font-family="Liberation Sans" font-size="10" stroke="#1b1b1b" stroke-width="0.250" fill="#1b1b1b" text-anchor="middle">2</text><text x="518.5" y="11" font-family="Liberation Sans" font-size="10" stroke="#1b1b1b" stroke-width="0.250" fill="#1b1b1b" text-anchor="middle">3</text><text x="614.5" y="11" font-family="Liberation Sans" font-size="10" stroke="#1b1b1b" stroke-width="0.250" fill="#1b1b1b" text-anchor="middle">4</text><text x="710.5" y="11" font-family="Liberation Sans" font-size="10" stroke="#1b1b1b" stroke-width="0.250" fill="#1b1b1b" text-anchor="middle">5</text><text x="806.5" y="11" font-family="Liberation Sans" font-size="10" stroke="#1b1b1b" stroke-width="0.250" fill="#1b1b1b" text-anchor="middle">6</text><text x="902.5" y="11" font-family="Liberation Sans" font-size="10" stroke="#1b1b1b" stroke-width="0.250" fill="#1b1b1b" text-anchor="middle">7</text></svg>
<div class="a" style="left:111px;top:344px;width:14px;height:22px;background:#fff;"></div>
<div class="a" style="left:111px;top:389px;width:14px;height:22px;background:#fff;"></div>
<div class="a" style="left:111px;top:434px;width:14px;height:22px;background:#fff;"></div>
<svg style="left:105px;top:220px" width="26" height="283" viewBox="0 0 26 283"><path d="M12 17.5 H14 M12 29.5 H14 M12 41.5 H14 M12 65.5 H14 M12 77.5 H14 M12 89.5 H14 M12 135.5 H14 M12 147.5 H14 M12 180.5 H14 M12 192.5 H14 M12 225.5 H14 M12 248.5 H14 M12 260.5 H14 M12 272.5 H14" stroke="#5a5a5a" stroke-width="1"/><path d="M9 53.5 H16" stroke="#3a3a3a" stroke-width="1"/><text x="13" y="105" font-family="Liberation Sans" font-size="10" stroke="#1b1b1b" stroke-width="0.250" fill="#1b1b1b" text-anchor="middle">1</text><path d="M10 110 h2 v2 h-2 z M14 110 h2 v2 h-2 z M10 114 h2 v2 h-2 z M14 114 h2 v2 h-2 z" fill="#9c9c9c"/><path d="M10 155 h2 v2 h-2 z M14 155 h2 v2 h-2 z M10 159 h2 v2 h-2 z M14 159 h2 v2 h-2 z" fill="#9c9c9c"/><path d="M10 200 h2 v2 h-2 z M14 200 h2 v2 h-2 z M10 204 h2 v2 h-2 z M14 204 h2 v2 h-2 z" fill="#9c9c9c"/></svg>
<div class="a" style="left:131px;top:223px;width:770px;height:263px;background:#fff;border:1px solid #d6d6d6;border-right:none;border-bottom:none;border-radius:4px 0 0 0;"></div>
<div class="a" style="left:230px;top:227px;width:624px;height:95px;background-color:#fff;background-image:linear-gradient(to right,#e4e4e4 1px,transparent 1px),linear-gradient(to bottom,#e4e4e4 1px,transparent 1px),linear-gradient(to right,#f1f1f1 1px,transparent 1px),linear-gradient(to bottom,#f1f1f1 1px,transparent 1px);background-size:48px 48px,48px 48px,12px 12px,12px 12px;background-position:0 -1px;"></div>
<div class="a" style="left:230px;top:344px;width:624px;height:23px;background-color:#fff;background-image:linear-gradient(to right,#e4e4e4 1px,transparent 1px),linear-gradient(to bottom,#e4e4e4 1px,transparent 1px),linear-gradient(to right,#f1f1f1 1px,transparent 1px),linear-gradient(to bottom,#f1f1f1 1px,transparent 1px);background-size:48px 48px,48px 48px,12px 12px,12px 12px;background-position:0 0px;"></div>
<div class="a" style="left:230px;top:390px;width:624px;height:21px;background-color:#fff;background-image:linear-gradient(to right,#e4e4e4 1px,transparent 1px),linear-gradient(to bottom,#e4e4e4 1px,transparent 1px),linear-gradient(to right,#f1f1f1 1px,transparent 1px),linear-gradient(to bottom,#f1f1f1 1px,transparent 1px);background-size:48px 48px,48px 48px,12px 12px,12px 12px;background-position:0 0px;"></div>
<div class="a" style="left:230px;top:433px;width:624px;height:22px;background-color:#fff;background-image:linear-gradient(to right,#e4e4e4 1px,transparent 1px),linear-gradient(to bottom,#e4e4e4 1px,transparent 1px),linear-gradient(to right,#f1f1f1 1px,transparent 1px),linear-gradient(to bottom,#f1f1f1 1px,transparent 1px);background-size:48px 48px,48px 48px,12px 12px,12px 12px;background-position:0 0px;"></div>
<div class="a" style="left:230px;top:455px;width:624px;height:31px;background-color:#fff;background-image:linear-gradient(to right,#e4e4e4 1px,transparent 1px),linear-gradient(to bottom,#e4e4e4 1px,transparent 1px),linear-gradient(to right,#f1f1f1 1px,transparent 1px),linear-gradient(to bottom,#f1f1f1 1px,transparent 1px);background-size:48px 48px,48px 48px,12px 12px,12px 12px;background-position:0 0px;"></div>
<div class="a" style="left:230px;top:323px;width:624px;height:21px;background:#f0f0f0;"></div>
<div class="a" style="left:230px;top:367px;width:624px;height:22px;background:#f0f0f0;"></div>
<div class="a" style="left:230px;top:226px;width:1px;height:260px;background:repeating-linear-gradient(to bottom,#6e6e6e 0 3px,transparent 3px 4px);"></div>
<div class="a" style="left:853px;top:226px;width:1px;height:260px;background:repeating-linear-gradient(to bottom,#7e7e7e 0 3px,transparent 3px 4px);"></div>
<div class="a" style="left:134px;top:322px;width:767px;height:1px;background:repeating-linear-gradient(to right,#8a8a8a 0 3px,transparent 3px 4px);"></div>
<div class="a" style="left:230px;top:322px;width:624px;height:1px;background:repeating-linear-gradient(to right,#6e6e6e 0 3px,transparent 3px 4px);"></div>
<div class="a" style="left:134px;top:454px;width:96px;height:1px;background:repeating-linear-gradient(to right,#8a8a8a 0 3px,transparent 3px 4px);"></div>
<div class="a" style="left:854px;top:454px;width:47px;height:1px;background:repeating-linear-gradient(to right,#8a8a8a 0 3px,transparent 3px 4px);"></div>
<svg style="left:236px;top:330px" width="8" height="7" viewBox="0 0 8 7"><path d="M0.300 0.300 H7.700 L4 6.700 Z" fill="#6b6b6b"/></svg>
<svg style="left:250px;top:325px" width="15" height="15" viewBox="0 0 15 15"><rect x="0" y="0" width="9.500" height="3.600" fill="#d2202f"/><path d="M5.500 5.500 H14.500 M5.500 7.500 H14.500 M5.500 9.500 H14.500" stroke="#8e8e8e" stroke-width="0.900"/><rect x="0" y="11" width="9.500" height="3.600" fill="#b4b4b4"/></svg>
<div class="t" style="left:267px;top:325px;color:#7e7e7e;letter-spacing:-0.392px;">GroupHeader1 ( Level 1 )</div>
<svg style="left:236px;top:374px" width="8" height="7" viewBox="0 0 8 7"><path d="M0.300 0.300 H7.700 L4 6.700 Z" fill="#6b6b6b"/></svg>
<svg style="left:250px;top:369px" width="15" height="15" viewBox="0 0 15 15"><rect x="0" y="0" width="9.500" height="3.600" fill="#d2202f"/><path d="M5.500 5.500 H14.500 M5.500 7.500 H14.500 M5.500 9.500 H14.500" stroke="#8e8e8e" stroke-width="0.900"/><rect x="0" y="11" width="9.500" height="3.600" fill="#b4b4b4"/></svg>
<div class="t" style="left:267px;top:369px;color:#7e7e7e;letter-spacing:-0.392px;">GroupHeader2 ( Level 0 )</div>
<div class="a" style="left:227px;top:408px;width:630px;height:49px;border:3px solid #a9bedd;"></div>
<div class="a" style="left:230px;top:411px;width:624px;height:22px;background:#dde8f8;"></div>
<svg style="left:236px;top:418px" width="8" height="7" viewBox="0 0 8 7"><path d="M0.300 0.300 H7.700 L4 6.700 Z" fill="#6b6b6b"/></svg>
<svg style="left:251px;top:413px" width="13" height="15" viewBox="0 0 13 15"><rect x="0.500" y="0.500" width="11.500" height="14" fill="#fff" stroke="#7a7a7a" stroke-width="1"/><rect x="2.500" y="2.500" width="7.500" height="10" fill="#fff" stroke="#9a9a9a" stroke-width="1"/><path d="M4 5.500 H8.500 M4 7.500 H8.500 M4 9.500 H8.500" stroke="#0a6ed1" stroke-width="1"/></svg>
<div class="t" style="left:267px;top:413px;color:#7e7e7e;letter-spacing:-0.401px;">Detail</div>
<div class="a" style="left:230px;top:344px;width:96px;height:23px;border:1px solid #c4c4c4;border-left:none;"></div>
<div class="a" style="left:326px;top:344px;width:96px;height:23px;border:1px solid #b8b8b8;"></div>
<div class="t ser" style="left:250px;top:348px;font-size:13px;color:#000;letter-spacing:-0.092px;">Employee:</div>
<div class="t ser b" style="left:328px;top:348px;font-size:13px;color:#000;letter-spacing:0.017px;">[EmployeeID]</div>
<svg style="left:411px;top:347px" width="9" height="11" viewBox="0 0 9 11"><path d="M0.300 2 C0.300 -0.300 8.700 -0.300 8.700 2 V8.800 C8.700 11.200 0.300 11.200 0.300 8.800 Z" fill="#ff8c0f"/><path d="M0.800 2.200 C2 3.700 7 3.700 8.200 2.200" fill="none" stroke="#ffc98a" stroke-width="0.900"/></svg>
<div class="a" style="left:230px;top:389px;width:624px;height:1px;background:#000;box-shadow:0 0.5px 0 rgba(0,0,0,.35);"></div>
<div class="a" style="left:230px;top:410px;width:624px;height:1px;background:#000;box-shadow:0 -0.5px 0 rgba(0,0,0,.35);"></div>
<div class="t ser c" style="left:230px;width:624px;top:392px;font-size:13px;color:#000;letter-spacing:-0.138px;">'Order: ' + [OrderID]</div>
<svg style="left:843px;top:391px" width="9" height="11" viewBox="0 0 9 11"><path d="M0.300 2 C0.300 -0.300 8.700 -0.300 8.700 2 V8.800 C8.700 11.200 0.300 11.200 0.300 8.800 Z" fill="#ff8c0f"/><path d="M0.800 2.200 C2 3.700 7 3.700 8.200 2.200" fill="none" stroke="#ffc98a" stroke-width="0.900"/></svg>
<div class="a" style="left:230px;top:433px;width:97px;height:22px;border-left:1px solid #b8b8b8;border-right:1px solid #b8b8b8;border-top:1px solid #c8c8c8;"></div>
<div class="t ser" style="left:232px;top:436px;font-size:13px;color:#000;letter-spacing:-0.189px;">[OrderID]</div>
<svg style="left:315px;top:435px" width="9" height="11" viewBox="0 0 9 11"><path d="M0.300 2 C0.300 -0.300 8.700 -0.300 8.700 2 V8.800 C8.700 11.200 0.300 11.200 0.300 8.800 Z" fill="#ff8c0f"/><path d="M0.800 2.200 C2 3.700 7 3.700 8.200 2.200" fill="none" stroke="#ffc98a" stroke-width="0.900"/></svg>
<div class="a" style="left:326px;top:433px;width:97px;height:22px;border-left:1px solid #b8b8b8;border-right:1px solid #b8b8b8;border-top:1px solid #c8c8c8;"></div>
<div class="t ser" style="left:328px;top:436px;font-size:13px;color:#000;letter-spacing:-0.020px;">[OrderDate]</div>
<svg style="left:411px;top:435px" width="9" height="11" viewBox="0 0 9 11"><path d="M0.300 2 C0.300 -0.300 8.700 -0.300 8.700 2 V8.800 C8.700 11.200 0.300 11.200 0.300 8.800 Z" fill="#ff8c0f"/><path d="M0.800 2.200 C2 3.700 7 3.700 8.200 2.200" fill="none" stroke="#ffc98a" stroke-width="0.900"/></svg>
<div class="a" style="left:422px;top:433px;width:75px;height:22px;border-left:1px solid #b8b8b8;border-right:1px solid #b8b8b8;border-top:1px solid #c8c8c8;"></div>
<div class="t ser" style="left:424px;top:436px;font-size:13px;color:#000;letter-spacing:-0.313px;">[Freight]</div>
<svg style="left:485px;top:435px" width="9" height="11" viewBox="0 0 9 11"><path d="M0.300 2 C0.300 -0.300 8.700 -0.300 8.700 2 V8.800 C8.700 11.200 0.300 11.200 0.300 8.800 Z" fill="#ff8c0f"/><path d="M0.800 2.200 C2 3.700 7 3.700 8.200 2.200" fill="none" stroke="#ffc98a" stroke-width="0.900"/></svg>
<div class="a" style="left:496px;top:433px;width:118px;height:22px;border-left:1px solid #b8b8b8;border-right:1px solid #b8b8b8;border-top:1px solid #c8c8c8;"></div>
<div class="t ser" style="left:498px;top:436px;font-size:13px;color:#000;letter-spacing:-0.078px;">[ShipAddress]</div>
<svg style="left:602px;top:435px" width="9" height="11" viewBox="0 0 9 11"><path d="M0.300 2 C0.300 -0.300 8.700 -0.300 8.700 2 V8.800 C8.700 11.200 0.300 11.200 0.300 8.800 Z" fill="#ff8c0f"/><path d="M0.800 2.200 C2 3.700 7 3.700 8.200 2.200" fill="none" stroke="#ffc98a" stroke-width="0.900"/></svg>
<div class="a" style="left:613px;top:433px;width:98px;height:22px;border-left:1px solid #b8b8b8;border-right:1px solid #b8b8b8;border-top:1px solid #c8c8c8;"></div>
<div class="t ser" style="left:615px;top:436px;font-size:13px;color:#000;letter-spacing:-0.071px;">[ShipCity]</div>
<svg style="left:699px;top:435px" width="9" height="11" viewBox="0 0 9 11"><path d="M0.300 2 C0.300 -0.300 8.700 -0.300 8.700 2 V8.800 C8.700 11.200 0.300 11.200 0.300 8.800 Z" fill="#ff8c0f"/><path d="M0.800 2.200 C2 3.700 7 3.700 8.200 2.200" fill="none" stroke="#ffc98a" stroke-width="0.900"/></svg>
<div class="a" style="left:710px;top:433px;width:145px;height:22px;border-left:1px solid #b8b8b8;border-right:1px solid #b8b8b8;border-top:1px solid #c8c8c8;"></div>
<div class="t ser" style="left:712px;top:436px;font-size:13px;color:#000;letter-spacing:-0.079px;">[ShipCountry]</div>
<svg style="left:843px;top:435px" width="9" height="11" viewBox="0 0 9 11"><path d="M0.300 2 C0.300 -0.300 8.700 -0.300 8.700 2 V8.800 C8.700 11.200 0.300 11.200 0.300 8.800 Z" fill="#ff8c0f"/><path d="M0.800 2.200 C2 3.700 7 3.700 8.200 2.200" fill="none" stroke="#ffc98a" stroke-width="0.900"/></svg>
<div class="a" style="left:230px;top:454px;width:624px;height:1px;background:#000;box-shadow:0 0.5px 0 rgba(0,0,0,.35);"></div>
<div class="a" style="left:861px;top:410px;width:24px;height:24px;background:#f0f0f0;border:1px solid #c2c2c2;"></div>
<svg style="left:866px;top:415px" width="14" height="14" viewBox="0 0 14 14"><g fill="#505050"><circle cx="7" cy="7" r="4.900"/><g id="gt"><rect x="5.700" y="0" width="2.600" height="14" rx="0.400"/><rect x="5.700" y="0" width="2.600" height="14" rx="0.400" transform="rotate(45 7 7)"/><rect x="5.700" y="0" width="2.600" height="14" rx="0.400" transform="rotate(90 7 7)"/><rect x="5.700" y="0" width="2.600" height="14" rx="0.400" transform="rotate(135 7 7)"/></g></g><circle cx="7" cy="7" r="2.300" fill="#f0f0f0"/></svg>
<div class="a" style="left:861px;top:442px;width:24px;height:24px;background:#f0f0f0;border:1px solid #c2c2c2;"></div>
<div class="t b c" style="left:860px;width:24px;top:445px;font-size:16px;font-style:italic;color:#505050;letter-spacing:0;">f</div>
<div class="a" style="left:901px;top:223px;width:18px;height:265px;background:#f3f3f3;"></div>
<div class="a" style="left:131px;top:486px;width:788px;height:17px;background:#f3f3f3;"></div>
<div class="a" style="left:906px;top:240px;width:7px;height:177px;background:#9a9a9a;border-radius:3.500px;"></div>
<svg style="left:905px;top:228px" width="9" height="7" viewBox="0 0 9 7"><path d="M4.500 0.500 L8.500 6.500 H0.500 Z" fill="#9a9a9a"/></svg>
<svg style="left:905px;top:474px" width="9" height="7" viewBox="0 0 9 7"><path d="M4.500 6.500 L8.500 0.500 H0.500 Z" fill="#9a9a9a"/></svg>
<div class="a" style="left:148px;top:491px;width:664px;height:7px;background:#9a9a9a;border-radius:3.500px;"></div>
<svg style="left:135px;top:490px" width="7" height="9" viewBox="0 0 7 9"><path d="M0.500 4.500 L6.500 0.500 V8.500 Z" fill="#9a9a9a"/></svg>
<svg style="left:890px;top:490px" width="7" height="9" viewBox="0 0 7 9"><path d="M6.500 4.500 L0.500 0.500 V8.500 Z" fill="#9a9a9a"/></svg>
<!-- ===== Group and Sort panel ===== -->
<div class="a" style="left:105px;top:503px;width:814px;height:232px;background:#f3f3f3;"></div>
<div class="hl" style="left:105px;top:503px;width:814px;background:#d0d0d0;"></div>
<div class="vl" style="left:918px;top:170px;height:534px;background:#cfcfcf;"></div>
<div class="t ptitle" style="left:114px;top:509px;letter-spacing:-0.214px;">Group and Sort</div>
<svg style="left:873px;top:514px" width="10" height="10" viewBox="0 0 10 10"><path d="M0 0.600 H9.400 M1 0.600 L3.500 4.100 L1.400 7.400 M8.400 0.600 L5.900 4.100 L8 7.400 M0.800 7.400 H8.600 M4.700 7.400 V10" fill="none" stroke="#1b1b1b" stroke-width="1.100"/></svg>
<svg style="left:898px;top:514px" width="9.400" height="9.400" viewBox="0 0 10 10"><path d="M0.500 0.500 L9.500 9.500 M9.500 0.500 L0.500 9.500" stroke="#1b1b1b" stroke-width="1.100"/></svg>
<!-- toolbar -->
<svg style="left:121px;top:543px" width="13" height="13" viewBox="0 0 13 13"><path d="M0.700 3.500 V0.700 H3.500 M0.700 9 V12.300 H3.500" fill="none" stroke="#0a6ed1" stroke-width="1.400"/><rect x="5" y="0" width="8" height="3" fill="#0a6ed1"/><rect x="3" y="4.200" width="10" height="8.800" fill="#10806a"/></svg>
<div class="t" style="left:139px;top:541px;letter-spacing:0.089px;">Add a Group</div>
<svg style="left:210px;top:547px" width="8" height="5" viewBox="0 0 8 5"><path d="M1 0.800 L4 3.800 L7 0.800" stroke="#1b1b1b" stroke-width="1.100" fill="none"/></svg>
<svg style="left:236px;top:543px" width="13" height="13" viewBox="0 0 13 13"><path d="M0 0 H7 L3.500 6 Z" fill="#0a6ed1"/><path d="M8 3.500 L12.500 12.500 H3.500 Z" fill="#10806a"/></svg>
<div class="t" style="left:254px;top:541px;letter-spacing:0.056px;">Add a Sort</div>
<svg style="left:313px;top:547px" width="8" height="5" viewBox="0 0 8 5"><path d="M1 0.800 L4 3.800 L7 0.800" stroke="#1b1b1b" stroke-width="1.100" fill="none"/></svg>
<svg style="left:338px;top:544px" width="11" height="11" viewBox="0 0 11 11"><path d="M1 1 L10 10 M10 1 L1 10" stroke="#e03b4b" stroke-width="1.800"/></svg>
<div class="t" style="left:355px;top:541px;letter-spacing:-0.075px;">Delete</div>
<div class="vl" style="left:395px;top:538px;height:22px;background:#d0d0d0;"></div>
<svg style="left:404px;top:542px" width="14" height="14" viewBox="0 0 14 14"><circle cx="7" cy="7" r="6.800" fill="#c9c9c9"/><path d="M7 11 V4.500 M4 7 L7 4 L10 7" fill="none" stroke="#fff" stroke-width="1.700"/></svg>
<div class="t" style="left:423px;top:541px;color:#b0b0b0;letter-spacing:0.138px;">Move Up</div>
<svg style="left:484px;top:542px" width="14" height="14" viewBox="0 0 14 14"><circle cx="7" cy="7" r="6.800" fill="#10806a"/><path d="M7 3 V9.500 M4 7 L7 10 L10 7" fill="none" stroke="#fff" stroke-width="1.700"/></svg>
<div class="t" style="left:503px;top:541px;letter-spacing:0.231px;">Move Down</div>
<!-- grid -->
<div class="a" style="left:105px;top:565px;width:813px;height:108px;background:#fff;"></div>
<div class="a" style="left:105px;top:565px;width:813px;height:25px;background:#fafafa;"></div>
<div class="hl" style="left:105px;top:565px;width:813px;background:#d4d4d4;"></div>
<div class="hl" style="left:105px;top:590px;width:813px;background:#dcdcdc;"></div>
<div class="a" style="left:356px;top:591px;width:214px;height:22px;background:#e6e6e6;"></div>
<div class="hl" style="left:105px;top:613px;width:466px;background:#e0e0e0;"></div>
<div class="hl" style="left:129px;top:636px;width:442px;background:#e0e0e0;"></div>
<div class="vl" style="left:355px;top:566px;height:71px;background:#dcdcdc;"></div>
<div class="vl" style="left:419px;top:566px;height:71px;background:#dcdcdc;"></div>
<div class="vl" style="left:496px;top:566px;height:71px;background:#dcdcdc;"></div>
<div class="vl" style="left:570px;top:566px;height:71px;background:#dcdcdc;"></div>
<div class="t" style="left:109px;top:570px;letter-spacing:-0.761px;">Field Name</div>
<div class="t" style="left:360px;top:570px;letter-spacing:-0.359px;">Sort Order</div>
<div class="t" style="left:424px;top:570px;letter-spacing:-0.590px;">Show Header</div>
<div class="t" style="left:501px;top:570px;letter-spacing:-0.418px;">Show Footer</div>
<div class="t" style="left:108px;top:594px;letter-spacing:-0.544px;">EmployeeID</div>
<svg style="left:338px;top:599px" width="10" height="6" viewBox="0 0 10 6"><path d="M1 0.800 L5 4.800 L9 0.800" stroke="#1b1b1b" stroke-width="1.100" fill="none"/></svg>
<div class="t" style="left:360px;top:594px;letter-spacing:-0.647px;">Ascending</div>
<div class="t" style="left:132px;top:617px;letter-spacing:-0.456px;">CustomerID</div>
<div class="t" style="left:360px;top:617px;letter-spacing:-0.647px;">Ascending</div>
<!-- checkboxes -->
<div class="a" style="left:450px;top:594px;width:16px;height:16px;background:#0067c0;border-radius:3.500px;"></div>
<svg style="left:450px;top:594px" width="16" height="16" viewBox="0 0 16 16"><path d="M3.800 8.200 L6.800 11.200 L12.300 4.800" fill="none" stroke="#fff" stroke-width="1.300"/></svg>
<div class="a" style="left:450px;top:617px;width:16px;height:16px;background:#0067c0;border-radius:3.500px;"></div>
<svg style="left:450px;top:617px" width="16" height="16" viewBox="0 0 16 16"><path d="M3.800 8.200 L6.800 11.200 L12.300 4.800" fill="none" stroke="#fff" stroke-width="1.300"/></svg>
<div class="a" style="left:526px;top:594px;width:16px;height:16px;background:#fff;border:1px solid #cfcfcf;border-radius:3.500px;"></div>
<div class="a" style="left:526px;top:617px;width:16px;height:16px;background:#fff;border:1px solid #cfcfcf;border-radius:3.500px;"></div>
<!-- bottom tabs -->
<div class="a" style="left:105px;top:673px;width:813px;height:30px;background:#fafafa;"></div>
<div class="hl" style="left:105px;top:672px;width:813px;background:#d0d0d0;"></div>
<div class="a" style="left:222px;top:672px;width:153px;height:25px;background:#f5f5f5;border:1px solid #d0d0d0;border-radius:0 0 5px 5px;"></div>
<div class="a" style="left:109px;top:672px;width:114px;height:27px;background:#f3f3f3;border:1px solid #d0d0d0;border-top:1px solid #d0d0d0;border-radius:0 0 6px 6px;"></div>
<svg style="left:119px;top:678px" width="15" height="14" viewBox="0 0 15 14"><path d="M0 0 H9 V3 H4 L4 8 H0 Z" fill="#0a6ed1"/><path d="M3.500 5.500 H14.500 L9 13.500 Z" fill="#10806a"/></svg>
<div class="t" style="left:137px;top:677px;letter-spacing:-0.431px;">Group and Sort</div>
<svg style="left:226px;top:676px" width="16" height="16" viewBox="0 0 16 16"><rect x="0.700" y="0.700" width="12.600" height="12.600" fill="#fff" stroke="#49535a" stroke-width="1.200"/><rect x="0.700" y="0.700" width="12.600" height="2.600" fill="#0a6ed1"/><path d="M5.500 6 L3.500 8.300 L5.500 10.600" fill="none" stroke="#49535a" stroke-width="1.200"/><circle cx="11.300" cy="11.300" r="4.500" fill="#e03b4b"/><path d="M9.600 9.600 L13 13 M13 9.600 L9.600 13" stroke="#fff" stroke-width="1.200"/></svg>
<div class="t" style="left:251px;top:676px;letter-spacing:-0.364px;">Report Design Analyzer</div>
<!-- ===== Status bar ===== -->
<div class="a" style="left:105px;top:704px;width:1171px;height:31px;background:#fafafa;"></div>
<div class="hl" style="left:105px;top:703px;width:1171px;background:#d0d0d0;"></div>
<div class="t" style="left:112px;top:711px;letter-spacing:-0.074px;">Detail { Height: 0.23&#8243; }</div>
<svg style="left:1043px;top:710px" width="12" height="15" viewBox="0 0 12 15"><path d="M6 0.300 C6.800 0.300 7.200 0.800 7.200 1.500 C9.300 2.100 10.200 4 10.200 6 C10.200 8.500 10.800 9.800 11.800 10.800 V11.600 H0.200 V10.800 C1.200 9.800 1.800 8.500 1.800 6 C1.800 4 2.700 2.100 4.800 1.500 C4.800 0.800 5.200 0.300 6 0.300 Z" fill="#49535a"/><path d="M4.300 12.600 H7.700 C7.700 14.600 4.300 14.600 4.300 12.600 Z" fill="#49535a"/></svg>
<div class="vl" style="left:1064px;top:708px;height:22px;background:#d8d8d8;"></div>
<div class="t" style="left:1072px;top:711px;letter-spacing:-0.380px;">100%</div>
<div class="a" style="left:1119px;top:718px;width:12px;height:1.500px;background:#8a8a8a;"></div>
<div class="a" style="left:1142px;top:716px;width:80px;height:4px;background:#9a9a9a;border-radius:2px;"></div>
<div class="a" style="left:1142px;top:716px;width:38px;height:4px;background:#0067c0;border-radius:2px;"></div>
<div class="a" style="left:1172px;top:709px;width:18px;height:18px;background:#fff;border:1px solid #d6d6d6;border-radius:9px;"></div>
<div class="a" style="left:1174.500px;top:711.500px;width:13px;height:13px;background:#0067c0;border-radius:7px;"></div>
<div class="a" style="left:1231px;top:718px;width:12px;height:1.500px;background:#8a8a8a;"></div>
<div class="a" style="left:1236.300px;top:713px;width:1.500px;height:12px;background:#8a8a8a;"></div>
<svg style="left:1264px;top:721px" width="7" height="7" viewBox="0 0 7 7" fill="#8a8a8a"><rect x="0" y="0" width="2" height="2"/><rect x="4" y="0" width="2" height="2"/><rect x="0" y="4" width="2" height="2"/><rect x="4" y="4" width="2" height="2"/></svg>
<!-- ===== Right: Report Explorer ===== -->
<div class="a" style="left:919px;top:170px;width:357px;height:534px;background:#f3f3f3;"></div>
<div class="t ptitle" style="left:927px;top:175px;letter-spacing:-0.257px;">Report Explorer</div>
<div class="a" style="left:1205px;top:180px;width:9px;height:9px;border:1px solid #1b1b1b;border-radius:1.500px;"></div>
<svg style="left:1230px;top:180px" width="10" height="10" viewBox="0 0 10 10"><path d="M0 0.600 H9.400 M1 0.600 L3.500 4.100 L1.400 7.400 M8.400 0.600 L5.900 4.100 L8 7.400 M0.800 7.400 H8.600 M4.700 7.400 V10" fill="none" stroke="#1b1b1b" stroke-width="1.100"/></svg>
<svg style="left:1255px;top:180px" width="9.400" height="9.400" viewBox="0 0 10 10"><path d="M0.500 0.500 L9.500 9.500 M9.500 0.500 L0.500 9.500" stroke="#1b1b1b" stroke-width="1.100"/></svg>
<!-- search -->
<div class="a" style="left:919px;top:199px;width:357px;height:23px;background:#fff;border-bottom:1px solid #c2c2c2;"></div>
<div class="t" style="left:922px;top:202px;color:#b2b2b2;letter-spacing:-0.035px;">Enter text to search...</div>
<svg style="left:1256px;top:204px" width="14" height="13" viewBox="0 0 14 13"><circle cx="8" cy="5.300" r="4.600" fill="none" stroke="#1b1b1b" stroke-width="1.100"/><path d="M4.700 8.700 L0.800 12.500" stroke="#1b1b1b" stroke-width="1.200"/></svg>
<!-- tree -->
<div class="a" style="left:919px;top:222px;width:357px;height:152px;background:#fafafa;"></div>
<div class="a" style="left:919px;top:222px;width:339px;height:152px;background:#fff;"></div>
<div class="a" style="left:919px;top:332px;width:339px;height:22px;background:#e6e6e6;"></div>
<div class="a" style="left:1265px;top:256px;width:3px;height:49px;background:#8a8a8a;border-radius:1.500px;"></div>
<svg style="left:950px;top:230px" width="10" height="6" viewBox="0 0 10 6"><path d="M1 0.800 L5 4.800 L9 0.800" stroke="#1b1b1b" stroke-width="1.100" fill="none"/></svg>
<svg style="left:950px;top:296px" width="10" height="6" viewBox="0 0 10 6"><path d="M1 0.800 L5 4.800 L9 0.800" stroke="#1b1b1b" stroke-width="1.100" fill="none"/></svg>
<svg style="left:952px;top:338px" width="6" height="10" viewBox="0 0 6 10"><path d="M0.800 1 L4.800 5 L0.800 9" stroke="#1b1b1b" stroke-width="1.100" fill="none"/></svg>
<svg style="left:972px;top:225px" width="15" height="15" viewBox="0 0 15 15"><rect x="0" y="0" width="8.500" height="3.800" fill="#e2445c"/><path d="M5.500 5.500 H14.500 M5.500 7.500 H14.500 M5.500 9.500 H14.500" stroke="#8e9499" stroke-width="0.900"/><rect x="0" y="11" width="8.500" height="3.800" fill="#b0b4b7"/></svg>
<svg style="left:972px;top:291px" width="15" height="15" viewBox="0 0 15 15"><rect x="0" y="0" width="8.500" height="3.800" fill="#e2445c"/><path d="M5.500 5.500 H14.500 M5.500 7.500 H14.500 M5.500 9.500 H14.500" stroke="#8e9499" stroke-width="0.900"/><rect x="0" y="11" width="8.500" height="3.800" fill="#b0b4b7"/></svg>
<div class="t" style="left:994px;top:225px;letter-spacing:-0.490px;">GroupHeader1</div>
<div class="t" style="left:994px;top:291px;letter-spacing:-0.490px;">GroupHeader2</div>
<div class="t b" style="left:996.500px;top:248px;font-size:17px;color:#0a6ed1;letter-spacing:0;">A</div>
<div class="t" style="left:1018px;top:247px;letter-spacing:-0.551px;">label6</div>
<div class="t b" style="left:996.500px;top:270px;font-size:17px;color:#0a6ed1;letter-spacing:0;">A</div>
<svg style="left:1004px;top:276px" width="7.500" height="9" viewBox="0 0 7 8"><path d="M0.200 1.600 C0.200 -0.300 6.800 -0.300 6.800 1.600 V6.400 C6.800 8.300 0.200 8.300 0.200 6.400 Z" fill="#ff8c0f" stroke="#fff" stroke-width="0.600"/></svg>
<div class="t" style="left:1018px;top:269px;letter-spacing:-0.551px;">label1</div>
<div class="t b" style="left:996.500px;top:314px;font-size:17px;color:#0a6ed1;letter-spacing:0;">A</div>
<svg style="left:1004px;top:320px" width="7.500" height="9" viewBox="0 0 7 8"><path d="M0.200 1.600 C0.200 -0.300 6.800 -0.300 6.800 1.600 V6.400 C6.800 8.300 0.200 8.300 0.200 6.400 Z" fill="#ff8c0f" stroke="#fff" stroke-width="0.600"/></svg>
<div class="t" style="left:1018px;top:313px;letter-spacing:-0.499px;">label10</div>
<svg style="left:973px;top:336px" width="13" height="15" viewBox="0 0 13 15"><rect x="0.500" y="0.500" width="12" height="14" fill="#fff" stroke="#49535a" stroke-width="1"/><rect x="2.500" y="2.500" width="8" height="10" fill="#fff" stroke="#8e9499" stroke-width="1"/><path d="M4.500 5.500 H8.500 M4.500 7.500 H8.500 M4.500 9.500 H8.500" stroke="#0a6ed1" stroke-width="1"/></svg>
<div class="t" style="left:994px;top:335px;letter-spacing:-0.434px;">Detail</div>
<svg style="left:973px;top:358px" width="13" height="15" viewBox="0 0 13 15"><rect x="0.500" y="0.500" width="12" height="12.500" fill="#fff" stroke="#49535a" stroke-width="1"/><rect x="2.500" y="2.500" width="8" height="10" fill="#fff" stroke="#8e9499" stroke-width="1"/><rect x="0" y="12.500" width="13" height="2.300" fill="#10806a"/></svg>
<div class="t" style="left:994px;top:357px;letter-spacing:-0.491px;">BottomMargin</div>
<!-- explorer tabs -->
<div class="a" style="left:919px;top:374px;width:357px;height:30px;background:#fafafa;"></div>
<div class="hl" style="left:919px;top:374px;width:357px;background:#d0d0d0;"></div>
<div class="a" style="left:1038px;top:374px;width:82px;height:24px;background:#f5f5f5;border:1px solid #d0d0d0;border-radius:0 0 5px 5px;"></div>
<div class="a" style="left:923px;top:374px;width:117px;height:27px;background:#f3f3f3;border:1px solid #d0d0d0;border-top:1px solid #d0d0d0;border-radius:0 0 6px 6px;"></div>
<svg style="left:933px;top:380px" width="14" height="13" viewBox="0 0 14 13"><rect x="5" y="0" width="4" height="4" fill="#49535a"/><path d="M7 4 V6.500 M2.300 9 V6.500 H11.700 V9" fill="none" stroke="#49535a" stroke-width="1.100"/><rect x="0" y="8.500" width="4.800" height="4.500" fill="#ff8c0f"/><rect x="9.200" y="8.500" width="4.800" height="4.500" fill="#ff8c0f"/></svg>
<div class="t" style="left:951px;top:379px;letter-spacing:-0.323px;">Report Explorer</div>
<svg style="left:1043px;top:378px" width="16" height="15" viewBox="0 0 16 15"><g fill="#ff8c0f"><ellipse cx="5.500" cy="2.500" rx="5.500" ry="2.500"/><path d="M0 4.500 C1.500 6.800 9.500 6.800 11 4.500 V6.500 C9.500 9 1.500 9 0 6.500 Z"/><path d="M0 8.500 C1.500 10.800 6 10.800 7 10.300 V12.300 C5 13 1.500 12.500 0 10.500 Z"/></g><rect x="8.700" y="8.700" width="6.600" height="2.200" fill="#fff" stroke="#49535a" stroke-width="1"/><rect x="8.700" y="12.100" width="6.600" height="2.200" fill="#fff" stroke="#49535a" stroke-width="1"/></svg>
<div class="t" style="left:1068px;top:378px;letter-spacing:-0.453px;">Field List</div>
<div class="hl" style="left:919px;top:404px;width:357px;background:#d0d0d0;"></div>

<!-- ===== Right: Properties ===== -->
<div class="t ptitle" style="left:927px;top:411px;letter-spacing:-0.390px;">Properties</div>
<div class="a" style="left:1205px;top:416px;width:9px;height:9px;border:1px solid #1b1b1b;border-radius:1.500px;"></div>
<svg style="left:1230px;top:416px" width="10" height="10" viewBox="0 0 10 10"><path d="M0 0.600 H9.400 M1 0.600 L3.500 4.100 L1.400 7.400 M8.400 0.600 L5.900 4.100 L8 7.400 M0.800 7.400 H8.600 M4.700 7.400 V10" fill="none" stroke="#1b1b1b" stroke-width="1.100"/></svg>
<svg style="left:1255px;top:416px" width="9.400" height="9.400" viewBox="0 0 10 10"><path d="M0.500 0.500 L9.500 9.500 M9.500 0.500 L0.500 9.500" stroke="#1b1b1b" stroke-width="1.100"/></svg>
<div class="cb" style="left:931px;top:445px;width:332px;height:23px;"></div>
<div class="t b" style="left:934px;top:448px;letter-spacing:0.145px;">Detail&nbsp;&nbsp; Detail</div>
<svg style="left:1247px;top:453px" width="10" height="6" viewBox="0 0 10 6"><path d="M1 0.800 L5 4.800 L9 0.800" stroke="#1b1b1b" stroke-width="1.100" fill="none"/></svg>
<!-- category icons -->
<svg style="left:931px;top:489px" width="21" height="20" viewBox="0 0 21 20"><path d="M16.600 0.400 L20.600 4.400 L14.800 10.200 L10.800 6.200 Z" fill="#e2445c"/><path d="M10.100 6.900 L14.100 10.900 L12.200 12.800 L8.200 8.800 Z" fill="#49535a"/><path d="M7.500 9.500 L11.500 13.500 C9.500 17.500 4.500 19.300 0.500 19.300 C3.200 17 3.800 12.500 7.500 9.500 Z" fill="#ff8c0f"/></svg>
<svg style="left:963px;top:489px" width="21" height="20" viewBox="0 0 21 20" fill="#0a6ed1"><circle cx="14.7" cy="5.4" r="4.07"/><rect x="13.35" y="-0.10" width="2.7" height="11.00" rx="0.500" transform="rotate(0 14.7 5.4)"/><rect x="13.35" y="-0.10" width="2.7" height="11.00" rx="0.500" transform="rotate(45 14.7 5.4)"/><rect x="13.35" y="-0.10" width="2.7" height="11.00" rx="0.500" transform="rotate(90 14.7 5.4)"/><rect x="13.35" y="-0.10" width="2.7" height="11.00" rx="0.500" transform="rotate(135 14.7 5.4)"/><circle cx="14.7" cy="5.4" r="1.7" fill="#f3f3f3"/><circle cx="5.5" cy="14.3" r="4.07"/><rect x="4.15" y="8.80" width="2.7" height="11.00" rx="0.500" transform="rotate(0 5.5 14.3)"/><rect x="4.15" y="8.80" width="2.7" height="11.00" rx="0.500" transform="rotate(45 5.5 14.3)"/><rect x="4.15" y="8.80" width="2.7" height="11.00" rx="0.500" transform="rotate(90 5.5 14.3)"/><rect x="4.15" y="8.80" width="2.7" height="11.00" rx="0.500" transform="rotate(135 5.5 14.3)"/><circle cx="5.5" cy="14.3" r="1.7" fill="#f3f3f3"/></svg>
<div class="a" style="left:965px;top:516px;width:16px;height:3px;background:#0067c0;border-radius:1.500px;"></div>
<svg style="left:998px;top:490px" width="14.400" height="18" viewBox="0 0 16 18" preserveAspectRatio="none" fill="#ff8c0f"><ellipse cx="8" cy="3.500" rx="8" ry="3.500"/><path d="M0 6 C2.300 9.200 13.700 9.200 16 6 V9.300 C13.700 12.700 2.300 12.700 0 9.300 Z"/><path d="M0 11.500 C2.300 14.700 13.700 14.700 16 11.500 V14.500 C13.700 18.500 2.300 18.500 0 14.500 Z"/></svg>
<svg style="left:1028px;top:490px" width="19" height="19" viewBox="0 0 19 19"><circle cx="5.600" cy="5.600" r="5.500" fill="#49535a"/><rect x="3.900" y="-1.500" width="3.400" height="7" fill="#f3f3f3" transform="rotate(-45 5.600 5.600)"/><path d="M8.500 8.500 L16.600 16.400" stroke="#49535a" stroke-width="3.800" stroke-linecap="round"/></svg>
<svg style="left:1059px;top:489px" width="21" height="20" viewBox="0 0 21 20"><path d="M10.500 0.300 L13.500 7.200 L20.800 7.800 L15.200 12.600 L17 19.800 L10.500 15.900 L4 19.800 L5.800 12.600 L0.200 7.800 L7.500 7.200 Z" fill="#0a6ed1"/></svg>
<div class="cb" style="left:1085px;top:489px;width:184px;height:21px;"></div>
<div class="t" style="left:1088px;top:491px;color:#b2b2b2;letter-spacing:-0.066px;">Enter text to search...</div>
<svg style="left:1250px;top:493px" width="14" height="13" viewBox="0 0 14 13"><circle cx="8" cy="5.300" r="4.600" fill="none" stroke="#1b1b1b" stroke-width="1.100"/><path d="M4.700 8.700 L0.800 12.500" stroke="#1b1b1b" stroke-width="1.200"/></svg>
<div class="hl" style="left:919px;top:519px;width:357px;background:#d0d0d0;"></div>
<!-- property rows -->
<div class="a" style="left:919px;top:520px;width:357px;height:104px;background:#f3f3f3;"></div>
<div class="t" style="left:947px;top:535px;letter-spacing:-0.428px;">Drill-Down Control</div>
<div class="cb" style="left:1043px;top:532px;width:172px;height:21px;"></div>
<div class="t" style="left:1046px;top:535px;letter-spacing:-0.399px;">label10</div>
<svg style="left:1198px;top:540px" width="10" height="6" viewBox="0 0 10 6"><path d="M1 0.800 L5 4.800 L9 0.800" stroke="#1b1b1b" stroke-width="1.100" fill="none"/></svg>
<div class="a" style="left:1230px;top:539px;width:8px;height:8px;background:#0067c0;border-radius:2px;"></div>
<div class="a" style="left:945px;top:558px;width:20px;height:20px;background:#fff;border:2px solid #0067c0;border-radius:2px;"></div>
<div class="a" style="left:948px;top:561px;width:14px;height:14px;background:#fff;border:1px solid #dadada;border-radius:3px;"></div>
<div class="t" style="left:967px;top:560px;letter-spacing:-0.491px;">Drill-Down Expanded</div>
<div class="a" style="left:1230px;top:564px;width:8px;height:8px;background:#0067c0;border-radius:2px;"></div>
<div class="a" style="left:947px;top:584px;width:16px;height:16px;background:#fff;border:1px solid #cfcfcf;border-radius:3.500px;"></div>
<div class="t" style="left:967px;top:584px;letter-spacing:-0.618px;">Fill Empty Space</div>
<div class="a" style="left:1230px;top:588px;width:8px;height:8px;background:#fff;border:1px solid #c8c8c8;border-radius:2px;"></div>
<svg style="left:932px;top:612px" width="6" height="10" viewBox="0 0 6 10"><path d="M0.800 1 L4.800 5 L0.800 9" stroke="#8a8a8a" stroke-width="1.100" fill="none"/></svg>
<div class="t" style="left:947px;top:609px;color:#8a8a8a;letter-spacing:-0.339px;">Hierarchy Print O...</div>
<div class="a" style="left:1043px;top:606px;width:172px;height:18px;background:#fff;border:1px solid #dedede;border-bottom:none;border-radius:4px 4px 0 0;"></div>
<div class="t" style="left:1046px;top:609px;color:#8a8a8a;letter-spacing:-0.318px;">(Hierarchy Print Options)</div>
<div class="a" style="left:1230px;top:613px;width:8px;height:8px;background:#fff;border:1px solid #d8d8d8;border-radius:2px;"></div>
<div class="hl" style="left:919px;top:624px;width:357px;background:#d0d0d0;"></div>
<div class="a" style="left:919px;top:625px;width:357px;height:47px;background:#f3f3f3;"></div>
<div class="t b" style="left:927px;top:644px;letter-spacing:-0.035px;">Drill-Down Expanded</div>
<!-- properties tabs -->
<div class="a" style="left:919px;top:673px;width:357px;height:30px;background:#fafafa;"></div>
<div class="hl" style="left:919px;top:672px;width:357px;background:#d0d0d0;"></div>
<div class="a" style="left:1011px;top:672px;width:110px;height:25px;background:#f5f5f5;border:1px solid #d0d0d0;border-radius:0 0 5px 5px;"></div>
<div class="a" style="left:923px;top:672px;width:90px;height:27px;background:#f3f3f3;border:1px solid #d0d0d0;border-top:1px solid #f3f3f3;border-radius:0 0 6px 6px;"></div>
<svg style="left:933px;top:677px" width="16" height="16" viewBox="0 0 16 16"><rect x="0" y="0" width="12" height="2.200" fill="#0a6ed1"/><path d="M0 4.500 H2.500 M4 4.500 H12 M0 7.500 H2.500 M4 7.500 H8 M0 10.500 H2.500 M4 10.500 H6.500" stroke="#8e9499" stroke-width="1.200"/><g fill="#0a6ed1"><circle cx="11.300" cy="11.300" r="3.400"/><rect x="10.300" y="6.500" width="2" height="9.600"/><rect x="10.300" y="6.500" width="2" height="9.600" transform="rotate(45 11.300 11.300)"/><rect x="10.300" y="6.500" width="2" height="9.600" transform="rotate(90 11.300 11.300)"/><rect x="10.300" y="6.500" width="2" height="9.600" transform="rotate(135 11.300 11.300)"/></g><circle cx="11.300" cy="11.300" r="1.300" fill="#f3f3f3"/></svg>
<div class="t" style="left:951px;top:677px;letter-spacing:-0.372px;">Properties</div>
<svg style="left:1016px;top:676px" width="15" height="15" viewBox="0 0 15 15"><rect x="0.600" y="0.600" width="11" height="11" rx="1" fill="#fff" stroke="#49535a" stroke-width="1.100"/><rect x="3.100" y="3.100" width="11.300" height="11.300" rx="1" fill="#fff" stroke="#49535a" stroke-width="1.100"/><rect x="5.300" y="9" width="1.800" height="3.300" fill="#0a6ed1"/><rect x="7.900" y="7" width="1.800" height="5.300" fill="#ff8c0f"/><rect x="10.500" y="5" width="1.800" height="7.300" fill="#e2445c"/></svg>
<div class="t" style="left:1041px;top:676px;letter-spacing:-0.410px;">Report Gallery</div>
<div class="a" style="left:0;top:734px;width:1276px;height:1px;background:#a0a0a0;"></div>
<div class="a" style="left:300px;top:734px;width:772px;height:1px;background:#1c4e80;"></div>
</div></div>
</body>
</html>
